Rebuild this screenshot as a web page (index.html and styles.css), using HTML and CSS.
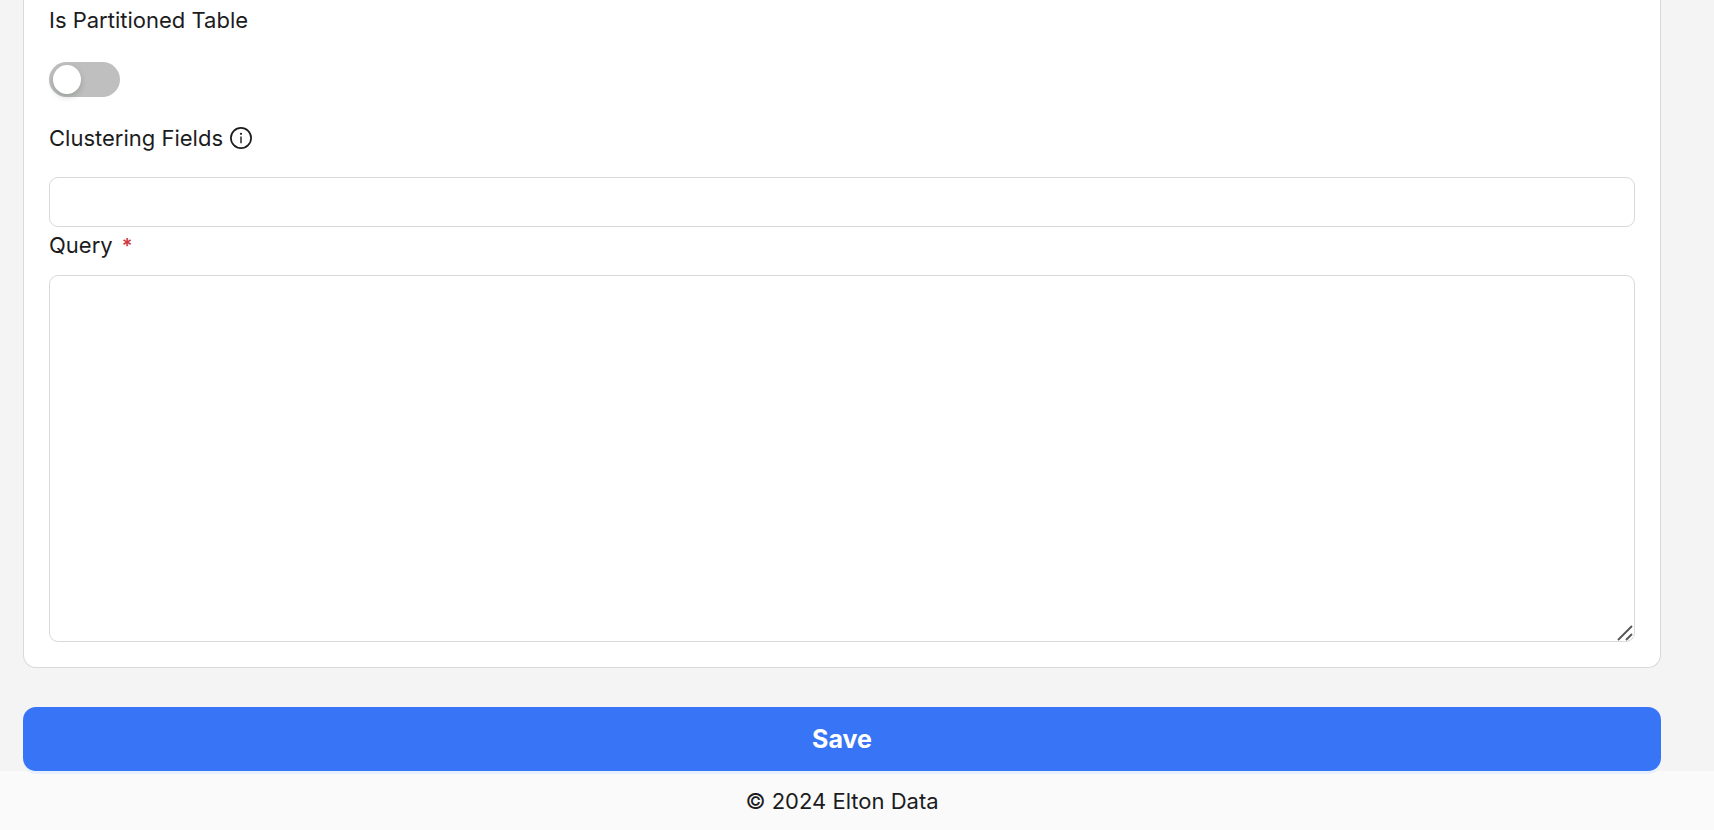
FILE: index.html
```html
<!DOCTYPE html>
<html lang="en">
<head>
<meta charset="utf-8">
<title>Elton Data</title>
<link rel="stylesheet" href="styles.css">
</head>
<body>
<form class="form">
  <section class="card">
    <label class="label" for="partitioned">Is Partitioned Table</label>
    <input class="switch" type="checkbox" role="switch" id="partitioned">
    <div class="label-row">
      <label class="label" for="clustering">Clustering Fields</label>
      <svg class="info" viewBox="0 0 22 22" aria-hidden="true">
        <circle cx="11" cy="11" r="10.1" fill="none" stroke="currentColor" stroke-width="1.7"/>
        <circle cx="11" cy="6.8" r="1.1" fill="currentColor"/>
        <path d="M11 9.4v6.9" stroke="currentColor" stroke-width="1.4"/>
      </svg>
    </div>
    <input class="field" type="text" id="clustering">
    <label class="label label-query" for="query">Query <span class="required">*</span></label>
    <div class="area">
      <textarea class="field field-area" id="query" required></textarea>
      <svg class="grip" viewBox="0 0 16 16" aria-hidden="true">
        <path d="M1 15L15 1M9 15l6-6" fill="none" stroke="#555" stroke-width="1.8"/>
      </svg>
    </div>
  </section>
  <button class="save" type="submit">Save</button>
</form>
<footer class="footer">© 2024 Elton Data</footer>
</body>
</html>
```
FILE: styles.css
```css
* {
  box-sizing: border-box;
}

body {
  margin: 0;
  background: #f4f4f4;
  color: #1c1c1e;
  font: 22px/34px Inter, "Liberation Sans", sans-serif;
}

.form {
  display: flex;
  flex-direction: column;
  gap: 39px;
  padding: 0 53px 0 23px;
}

.card {
  display: flex;
  flex-direction: column;
  padding: 3px 25px 25px;
  background: #fff;
  border: 1px solid #d9d9d9;
  border-top: 0;
  border-radius: 0 0 13px 13px;
}

.label-row {
  display: flex;
  align-items: center;
  gap: 7px;
  margin: 24px 0 22px;
}

.info {
  width: 22px;
  height: 22px;
}

.switch {
  appearance: none;
  display: flex;
  align-items: center;
  width: 71px;
  height: 35px;
  margin: 25px 0 0;
  padding: 0 4px;
  border-radius: 18px;
  background: #bfbfbf;
}

.switch::before {
  content: "";
  width: 28px;
  height: 29px;
  border-radius: 50%;
  background: #fff;
  box-shadow: 0 3px 6px rgba(0, 35, 11, 0.2);
}

.switch:checked {
  justify-content: flex-end;
  background: #3875f6;
}

.field {
  display: block;
  width: 100%;
  height: 50px;
  padding: 6px 16px;
  border: 1px solid #d9d9d9;
  border-radius: 9px;
  background: #fff;
  color: inherit;
  font: inherit;
}

.label-query {
  margin: 1px 0 13px;
}

.required {
  margin-left: 3px;
  color: #d1383d;
  font-size: 20px;
  font-weight: 600;
  line-height: 1;
}

.area {
  position: relative;
}

.field-area {
  height: 367px;
  resize: none;
}

.grip {
  position: absolute;
  right: 2px;
  bottom: 1px;
  width: 16px;
  height: 16px;
  pointer-events: none;
}

.save {
  position: relative;
  height: 64px;
  border: 0;
  border-radius: 13px;
  background: #3875f6;
  box-shadow: 0 3px 0 #e6f1fd;
  color: #fff;
  font: inherit;
  font-size: 25px;
  font-weight: 700;
}

.footer {
  min-height: 59px;
  padding: 13px 53px 12px 23px;
  background: #fafafa;
  text-align: center;
}
```
